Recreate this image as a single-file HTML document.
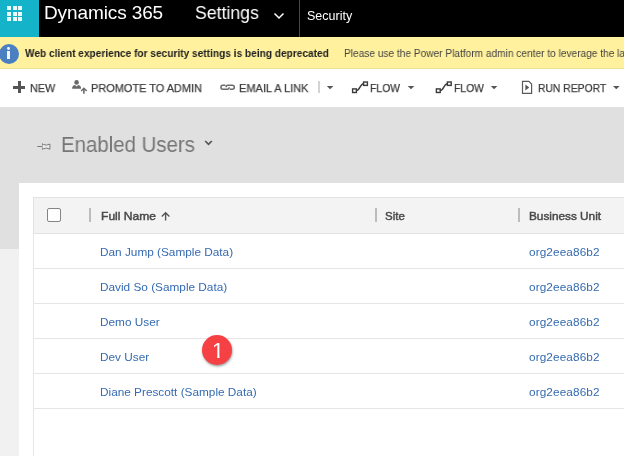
<!DOCTYPE html>
<html><head><meta charset="utf-8">
<style>
html,body{margin:0;padding:0;}
body{width:624px;height:456px;overflow:hidden;position:relative;background:#fff;font-family:"Liberation Sans",sans-serif;}
.a{position:absolute;white-space:nowrap;line-height:1;will-change:transform;transform-origin:0 50%;}
#top{left:0;top:0;width:624px;height:37.4px;background:#000;}
#waf{left:0;top:0;width:38.9px;height:37.4px;background:#15b3c9;}
#waf i{position:absolute;width:4px;height:4px;background:#e9fbff;}
#ban{left:0;top:37.4px;width:624px;height:32px;background:#fff19d;border-bottom:1px solid #ece192;box-sizing:border-box;}
#tb{left:0;top:69.4px;width:624px;height:37.4px;background:#fff;}
#gr{left:0;top:106.8px;width:624px;height:141.9px;background:#e0e0e0;}
#gl{left:0;top:248.7px;width:20px;height:208px;background:#f1f1f1;}
#pn{left:19.4px;top:182.5px;width:605px;height:274px;background:#fff;}
#th{left:33.4px;top:196.5px;width:591px;height:37px;background:#f3f3f3;border:1px solid #e2e2e2;border-right:0;box-sizing:border-box;}
.rl{left:33.4px;width:591px;height:1px;background:#e6e6e6;}
#vl{left:33.4px;top:233px;width:1px;height:223px;background:#e6e6e6;}
.t1{color:#fff;font-size:19px;}
.tbt{-webkit-text-stroke:0.25px #3c3c3c;color:#3c3c3c;font-size:11.5px;top:82.7px;}
.hd{color:#484848;font-size:11.5px;-webkit-text-stroke:0.45px #484848;top:210.7px;}
.lk{color:#356bb0;font-size:11.8px;}
.sep{width:1.6px;background:#bcbcbc;}
</style></head><body>
<div class="a" id="top"></div>
<div class="a" id="waf">
<i style="left:7px;top:6px"></i><i style="left:12.5px;top:6px"></i><i style="left:18px;top:6px"></i>
<i style="left:7px;top:11.5px"></i><i style="left:12.5px;top:11.5px"></i><i style="left:18px;top:11.5px"></i>
<i style="left:7px;top:17px"></i><i style="left:12.5px;top:17px"></i><i style="left:18px;top:17px"></i>
</div>
<div class="a t1" id="dyn" style="left:44.3px;top:3px;letter-spacing:-0.11px;">Dynamics 365</div>
<div class="a t1" id="set" style="left:195px;top:3px;transform:scaleX(0.93);">Settings</div>
<svg class="a" style="left:272.8px;top:12.4px" width="12" height="8" viewBox="0 0 12 8"><path d="M1.5 1.5 L6 6 L10.5 1.5" fill="none" stroke="#fff" stroke-width="1.45"/></svg>
<div class="a" style="left:298.6px;top:0;width:1px;height:37.4px;background:#474747;"></div>
<div class="a" id="sec" style="left:307px;top:9.5px;color:#fff;font-size:12.5px;">Security</div>

<div class="a" id="ban"></div>
<div class="a" style="left:-1px;top:43.5px;width:20px;height:20px;border-radius:50%;background:#4a7fc1;"></div>
<div class="a" style="left:7px;top:46.7px;width:2.8px;height:2.8px;border-radius:50%;background:#f2f6fc;"></div>
<div class="a" style="left:7.1px;top:50.8px;width:2.6px;height:8.4px;background:#f2f6fc;"></div>
<div class="a" id="b1" style="left:25.1px;top:48.4px;color:#222;font-size:11px;font-weight:bold;transform:scaleX(0.921);">Web client experience for security settings is being deprecated</div>
<div class="a" id="b2" style="left:344.4px;top:48.4px;transform:scaleX(0.921);color:#444;font-size:11px;">Please use the Power Platform admin center to leverage the latest</div>

<div class="a" id="tb"></div>
<div class="a" style="left:13px;top:85.5px;width:12.2px;height:2.6px;background:#555;"></div>
<div class="a" style="left:17.8px;top:80.8px;width:2.6px;height:12px;background:#555;"></div>
<div class="a tbt" id="new" style="left:30px;transform:scaleX(0.94);">NEW</div>
<div class="a tbt" id="pro" style="left:91.3px;transform:scaleX(0.952);">PROMOTE TO ADMIN</div>
<div class="a tbt" id="eml" style="left:238.7px;transform:scaleX(0.959);">EMAIL A LINK</div>
<div class="a sep" style="left:318px;top:81px;height:11.5px;background:#d4d4d4"></div>
<div class="a tbt" id="fl1" style="left:370.2px;transform:scaleX(0.905);">FLOW</div>
<div class="a tbt" id="fl2" style="left:454.2px;transform:scaleX(0.9);">FLOW</div>
<div class="a tbt" id="run" style="left:537.6px;transform:scaleX(0.9);">RUN REPORT</div>

<div class="a" id="gr"></div>
<div class="a" id="gl"></div>
<div class="a" id="enu" style="left:60.6px;top:134px;color:#767676;font-size:22.5px;transform:scaleX(0.908);">Enabled Users</div>

<div class="a" id="pn"></div>
<div class="a" id="th"></div>
<div class="a" id="vl"></div>
<div class="a rl" style="top:267.6px"></div>
<div class="a rl" style="top:302.6px"></div>
<div class="a rl" style="top:337.6px"></div>
<div class="a rl" style="top:372.6px"></div>
<div class="a rl" style="top:407.6px"></div>
<div class="a" style="left:47px;top:207.5px;width:13.5px;height:13.5px;box-sizing:border-box;border:1.5px solid #848484;border-radius:2px;background:#fff;"></div>
<div class="a sep" style="left:89px;top:208px;height:14px;"></div>
<div class="a sep" style="left:375px;top:208px;height:14px;"></div>
<div class="a sep" style="left:518px;top:208px;height:14px;"></div>
<div class="a hd" id="h1" style="left:100.6px;transform:scaleX(1.05);">Full Name</div>
<div class="a hd" id="h2" style="left:385px;">Site</div>
<div class="a hd" id="h3" style="left:529px;transform:scaleX(1.025);">Business Unit</div>

<div class="a lk" id="r1" style="left:100.2px;top:246.5px;">Dan Jump (Sample Data)</div>
<div class="a lk" id="r2" style="left:100.2px;top:281.5px;">David So (Sample Data)</div>
<div class="a lk" id="r3" style="left:100.2px;top:316.5px;">Demo User</div>
<div class="a lk" id="r4" style="left:100.2px;top:351.5px;">Dev User</div>
<div class="a lk" id="r5" style="left:100.2px;top:386.5px;">Diane Prescott (Sample Data)</div>
<div class="a lk" id="o1" style="left:529px;top:246.5px;letter-spacing:0.1px;">org2eea86b2</div>
<div class="a lk" id="o2" style="left:529px;top:281.5px;letter-spacing:0.1px;">org2eea86b2</div>
<div class="a lk" id="o3" style="left:529px;top:316.5px;letter-spacing:0.1px;">org2eea86b2</div>
<div class="a lk" id="o4" style="left:529px;top:351.5px;letter-spacing:0.1px;">org2eea86b2</div>
<div class="a lk" id="o5" style="left:529px;top:386.5px;letter-spacing:0.1px;">org2eea86b2</div>

<svg class="a" id="ico" style="left:0;top:0" width="624" height="456" viewBox="0 0 624 456">
<!-- promote icon -->
<g fill="#6a6a6a">
<circle cx="76.6" cy="82.4" r="2.3"/>
<path d="M72.2 88.8 V87.4 Q72.4 85 75 84.9 L76.6 86.6 L78.2 84.9 Q80.8 85 81 87.4 V88.8 Z"/>
<path d="M83.9 87.2 L87.2 90.6 L86.2 91.6 L84.7 90.1 V93.7 H83.1 V90.1 L81.6 91.6 L80.6 90.6 Z"/>
</g>
<!-- link icon -->
<g fill="none" stroke="#6a6a6a" stroke-width="1.5">
<path d="M225.4 85.2 H222.9 a2 2 0 0 0 0 4 H227.2 a2 2 0 0 0 2 -2"/>
<path d="M229.8 89.2 H232.3 a2 2 0 0 0 0 -4 H228 a2 2 0 0 0 -2 2"/>
</g>
<!-- dropdown arrows -->
<g fill="#555">
<path d="M326.8 86 H333.4 L330.1 89.2 Z"/>
<path d="M407.7 86 H414.3 L411 89.2 Z"/>
<path d="M490.8 86 H497.4 L494.1 89.2 Z"/>
<path d="M613 86 H619.6 L616.3 89.2 Z"/>
</g>
<!-- flow icons -->
<g fill="none" stroke="#3a3a3a" stroke-width="1.4">
<rect x="352.6" y="88.9" width="3.8" height="3.6"/>
<rect x="363.6" y="82" width="3.8" height="3.4"/>
<path d="M356.4 90.6 C360 90.6 360 83.7 363.6 83.7"/>
<rect x="436.4" y="88.9" width="3.8" height="3.6"/>
<rect x="447.4" y="82" width="3.8" height="3.4"/>
<path d="M440.2 90.6 C443.8 90.6 443.8 83.7 447.4 83.7"/>
</g>
<!-- report icon -->
<path d="M522.5 81.3 H528.8 L531.6 84.1 V93.3 H522.5 Z" fill="none" stroke="#5a5a5a" stroke-width="1.2"/>
<path d="M525.4 84.6 L529.2 87.5 L525.4 90.4 Z" fill="#555"/>
<!-- pin icon -->
<g fill="none" stroke="#7a7a7a" stroke-width="1">
<path d="M37.3 146.5 H42.4"/>
<path d="M42.5 143.4 V149.7"/>
<path d="M42.5 144.5 H43.6 Q46.5 146 49.9 144 V149.2 Q46.5 147.2 43.6 148.7 H42.5" fill="#ececec"/>
</g>
<!-- heading chevron -->
<path d="M205.2 141 L208.5 144.4 L211.8 141" fill="none" stroke="#555" stroke-width="1.7"/>
<!-- sort arrow -->
<path d="M165.6 220.6 V213 M161.8 216.5 L165.6 212.7 L169.4 216.5" fill="none" stroke="#555" stroke-width="1.35"/>
</svg>
<div class="a" id="red" style="left:202.2px;top:335px;width:30.4px;height:30.4px;border-radius:50%;background:#f64144;box-shadow:0.5px 1.5px 2.5px rgba(0,0,0,.4);"></div>
<div class="a" id="one" style="left:212px;top:341px;width:12px;height:22px;color:#fff;font-size:21.5px;clip-path:polygon(0 0,100% 0,100% 15px,7.53px 15px,7.53px 100%,5.27px 100%,5.27px 15px,0 15px);">1</div>
</body></html>
